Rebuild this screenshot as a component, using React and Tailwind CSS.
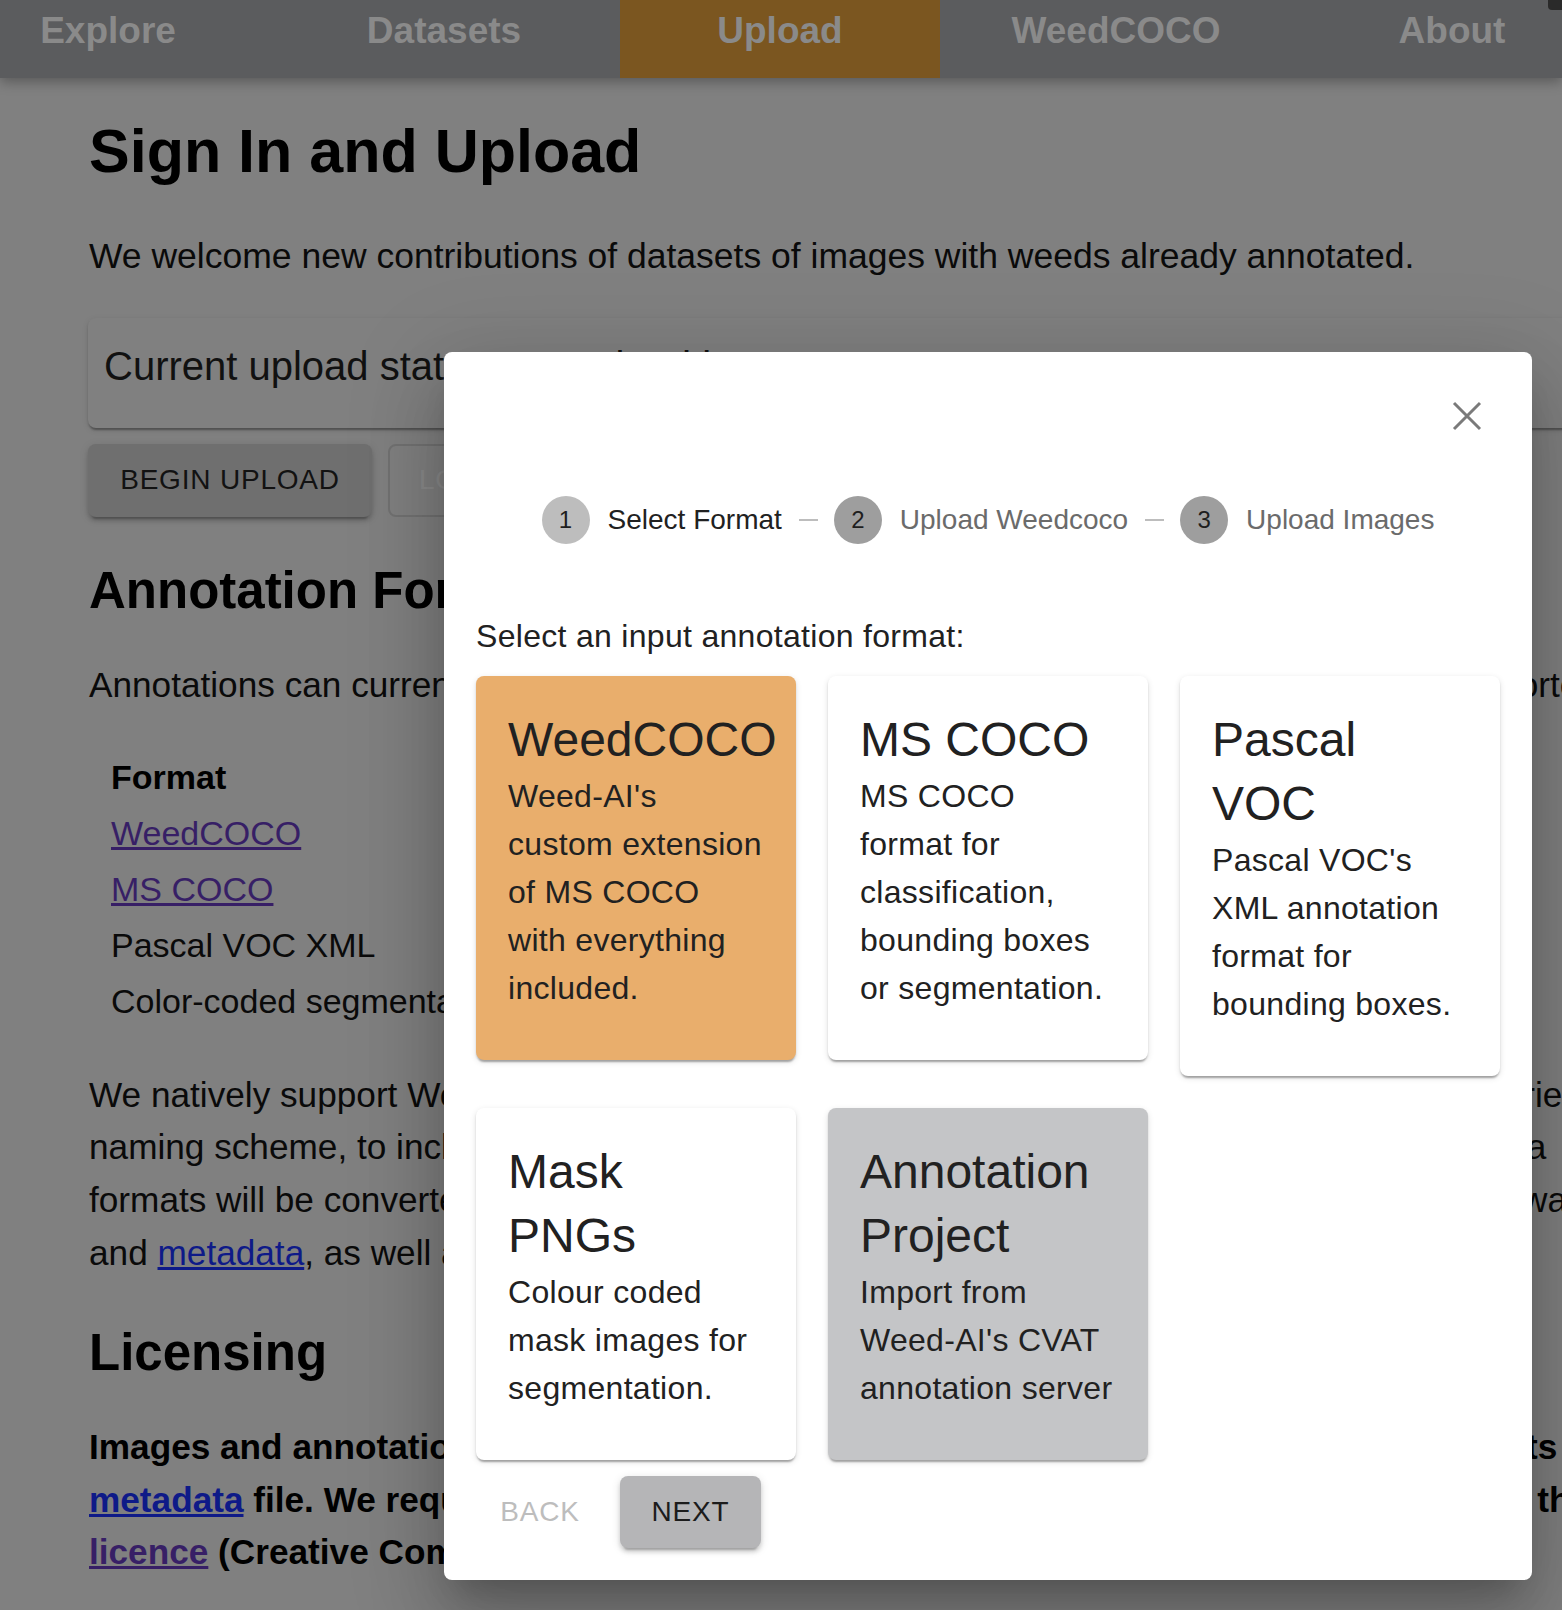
import React from "react";

const navItems = ["Explore", "Datasets", "Upload", "WeedCOCO", "About"];

function Card({ title, body, bg, shadow = true }) {
  return (
    <div
      className={`w-[320px] rounded-lg pl-8 pr-[33px] pt-8 pb-12 ${bg} ${
        shadow
          ? "shadow-[0_4px_2px_-2px_rgba(0,0,0,0.2),0_2px_2px_0_rgba(0,0,0,0.14),0_2px_6px_0_rgba(0,0,0,0.12)]"
          : ""
      }`}
    >
      <div className="text-[48px] leading-[64px] text-[#212121]">{title}</div>
      <div className="text-[32px] leading-[48px] tracking-[0.3px] text-[#212121]">{body}</div>
    </div>
  );
}

function Step({ n, label, circle, text }) {
  return (
    <div className="flex items-center">
      <div
        className={`w-12 h-12 rounded-full flex items-center justify-center text-[24px] leading-none text-[#1e1e1e] ${circle}`}
      >
        {n}
      </div>
      <span className={`ml-[18px] text-[28px] leading-[40px] ${text}`}>{label}</span>
    </div>
  );
}

function Connector() {
  return <div className="ml-[17px] mr-4 w-[19px] h-[2px] bg-[#bdbdbd]" />;
}

export default function App() {
  return (
    <div className="relative w-[1562px] h-[1610px] overflow-hidden bg-[#808080] font-['Liberation_Sans',Arial,sans-serif]">
      {/* Nav */}
      <nav className="relative z-10 h-[78px] bg-[#5b5c5e] shadow-[0_4px_12px_rgba(0,0,0,0.3)]">
        <div className="flex h-full -ml-[60px]">
          {navItems.map((item) => (
            <div key={item} className="w-[336px] shrink-0 px-2 h-full">
              <div
                className={`h-full flex justify-center pt-[12px] ${
                  item === "Upload" ? "bg-[#7b5620]" : ""
                }`}
              >
                <span className="text-[37px] leading-none font-bold text-[#8a8a8a]">{item}</span>
              </div>
            </div>
          ))}
        </div>
        <div className="absolute right-0 top-0 w-[14px] h-[10px] rounded-bl-sm bg-[#2a2a2a]" />
      </nav>

      {/* Page content (dimmed) */}
      <main className="pl-[89px] text-[#0a0a0a]">
        <h1 className="mt-[37px] text-[61px] leading-[73px] font-bold text-black">Sign In and Upload</h1>
        <p className="mt-[42px] text-[35.5px] leading-[52.8px] whitespace-nowrap">
          We welcome new contributions of datasets of images with weeds already annotated.
        </p>

        <div className="mt-[35px] -ml-px w-[1560px] h-[110px] rounded-lg bg-[#808080] pl-4 pt-4 shadow-[0_4px_2px_-2px_rgba(0,0,0,0.2),0_2px_2px_0_rgba(0,0,0,0.14),0_2px_6px_0_rgba(0,0,0,0.12)]">
          <div className="text-[40px] leading-[64px] text-[#111] whitespace-nowrap">
            Current upload status: No upload in progress
          </div>
        </div>

        <div className="mt-4 -ml-px flex gap-4">
          <div className="w-[284px] h-[73px] rounded-lg bg-[#6f6f6f] flex items-center justify-center text-[28px] tracking-[0.8px] text-[#121212] shadow-[0_6px_2px_-4px_rgba(0,0,0,0.2),0_4px_4px_0_rgba(0,0,0,0.14),0_2px_10px_0_rgba(0,0,0,0.12)]">
            BEGIN UPLOAD
          </div>
          <div className="w-[300px] h-[73px] rounded-lg border-2 border-[#727272] flex items-center pl-[29px] text-[28px] tracking-[0.8px] text-[#8a8a8a]">
            LOGOUT
          </div>
        </div>

        <h2 className="mt-[43px] text-[51px] leading-[61px] font-bold text-black whitespace-nowrap">
          Annotation Formats
        </h2>
        <p className="mt-[38px] text-[35.2px] leading-[52.8px] whitespace-nowrap">
          Annotations can currently be imported in the following formats, and these are also fully supported:
        </p>

        <div className="mt-[37px] pl-[22px] text-[34px] leading-[56px]">
          <div className="font-bold text-black">Format</div>
          <div>
            <a className="underline text-[#371f66]">WeedCOCO</a>
          </div>
          <div>
            <a className="underline text-[#371f66]">MS COCO</a>
          </div>
          <div>Pascal VOC XML</div>
          <div className="whitespace-nowrap">Color-coded segmentation masks</div>
        </div>

        <p className="mt-[40px] text-[35.2px] leading-[52.8px] whitespace-nowrap">
          We natively support WeedCOCO, and annotations in other formats should match our categories
          <br />
          naming scheme, to include species and growth stage information. Other annotations and data
          <br />
          formats will be converted to WeedCOCO on upload, and must include the images, crop and water
          <br />
          and <a className="underline text-[#0e1a88]">metadata</a>, as well as agronomic context.
        </p>

        <h2 className="mt-[42px] text-[51px] leading-[61px] font-bold text-black">Licensing</h2>
        <p className="mt-[38px] text-[35.2px] leading-[52.8px] font-bold text-black whitespace-nowrap">
          Images and annotations must be uploaded together with details of the collection and its accompanying
          <br />
          <a className="underline text-[#0e1a88]">metadata</a> file. We require that all contributions are released
          openly to the public under the
          <br />
          <a className="underline text-[#371f66]">licence</a> (Creative Commons Attribution 4.0 International).
        </p>
      </main>

      {/* Modal */}
      <div className="absolute z-20 left-[444px] top-[352px] w-[1088px] rounded-lg bg-white p-8 shadow-[0_22px_30px_-14px_rgba(0,0,0,0.2),0_48px_76px_6px_rgba(0,0,0,0.14),0_18px_92px_16px_rgba(0,0,0,0.12)]">
        <div className="h-16 flex items-center justify-end pr-[9px]">
          <button className="w-12 h-12 flex items-center justify-center">
            <svg width="48" height="48" viewBox="0 0 48 48">
              <path d="M11 11 L37 37 M37 11 L11 37" stroke="#7a7a7a" strokeWidth="3" strokeLinecap="butt" />
            </svg>
          </button>
        </div>

        <div className="mt-12 h-12 flex items-center justify-center">
          <Step n="1" label="Select Format" circle="bg-[#bdbdbd]" text="text-[#212121]" />
          <Connector />
          <Step n="2" label="Upload Weedcoco" circle="bg-[#9e9e9e]" text="text-[#6b6b6b]" />
          <Connector />
          <Step n="3" label="Upload Images" circle="bg-[#9e9e9e]" text="text-[#6b6b6b]" />
        </div>

        <div className="mt-[68px] text-[32px] leading-[48px] tracking-[0.3px] text-[#212121]">
          Select an input annotation format:
        </div>

        <div className="mt-4 grid grid-cols-[320px_320px_320px] gap-8 items-start">
          <Card
            title="WeedCOCO"
            body="Weed-AI's custom extension of MS COCO with everything included."
            bg="bg-[#e9ae6c]"
          />
          <Card
            title="MS COCO"
            body="MS COCO format for classification, bounding boxes or segmentation."
            bg="bg-white"
          />
          <Card
            title="Pascal VOC"
            body="Pascal VOC's XML annotation format for bounding boxes."
            bg="bg-white"
          />
          <Card
            title="Mask PNGs"
            body="Colour coded mask images for segmentation."
            bg="bg-white"
          />
          <Card
            title="Annotation Project"
            body="Import from Weed-AI's CVAT annotation server"
            bg="bg-[#c4c5c7]"
          />
        </div>

        <div className="mt-4 flex items-center">
          <button className="w-32 h-[72px] text-[28px] tracking-[0.8px] text-[#bdbdbd]">BACK</button>
          <button className="ml-4 w-[141px] h-[72px] rounded-lg bg-[#b5b5b7] text-[28px] tracking-[0.8px] text-[#1c1c1c] shadow-[0_6px_2px_-4px_rgba(0,0,0,0.2),0_4px_4px_0_rgba(0,0,0,0.14),0_2px_10px_0_rgba(0,0,0,0.12)]">
            NEXT
          </button>
        </div>
      </div>
    </div>
  );
}
